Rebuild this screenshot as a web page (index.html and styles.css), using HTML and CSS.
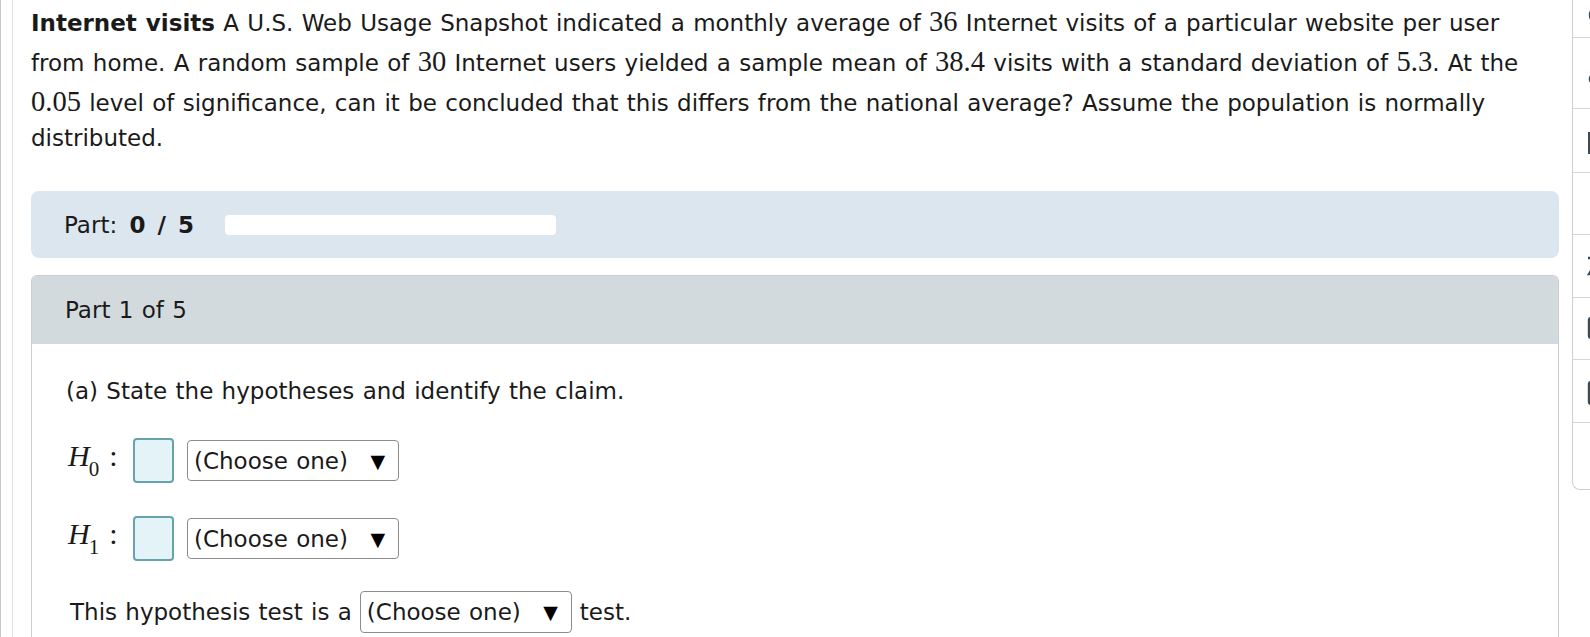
FILE: index.html
```html
<!DOCTYPE html>
<html>
<head>
<meta charset="utf-8">
<link rel="stylesheet" href="styles.css">
</head>
<body>
<div class="edge"></div>
<main class="main">
  <p class="problem"><b>Internet visits</b> A U.S. Web Usage Snapshot indicated a monthly average of <span class="num">36</span> Internet visits of a particular website per user<br>from home. A random sample of <span class="num">30</span> Internet users yielded a sample mean of <span class="num">38.4</span> visits with a standard deviation of <span class="num">5.3</span>. At the<br><span class="num">0.05</span> level of significance, can it be concluded that this differs from the national average? Assume the population is normally<br>distributed.</p>

  <div class="progress">
    <span class="plabel">Part: <b>0 / 5</b></span>
    <div class="bar"></div>
  </div>

  <section class="part">
    <header class="part-head">Part 1 of 5</header>
    <div class="part-body">
      <p class="question">(a) State the hypotheses and identify the claim.</p>

      <div class="hyp">
        <span class="hlabel"><i>H</i><sub>0</sub><span class="colon">:</span></span>
        <span class="sym"></span>
        <span class="select"><span>(Choose one)</span><span class="tri">&#9660;</span></span>
      </div>

      <div class="hyp second">
        <span class="hlabel"><i>H</i><sub>1</sub><span class="colon">:</span></span>
        <span class="sym"></span>
        <span class="select"><span>(Choose one)</span><span class="tri">&#9660;</span></span>
      </div>

      <div class="testline">
        <span>This hypothesis test is a</span>
        <span class="select"><span>(Choose one)</span><span class="tri">&#9660;</span></span>
        <span>test.</span>
      </div>
    </div>
  </section>
</main>

<aside class="side">
  <div class="tool t1">
    <svg class="ic" width="16" height="24" viewBox="0 0 16 24"><path d="M12 3 A9 9 0 1 0 12 21" fill="none" stroke="#3d4a52" stroke-width="2.4"/></svg>
  </div>
  <div class="tool t2">
    <svg class="ic" width="16" height="16" viewBox="0 0 16 16"><circle cx="8" cy="8" r="5" fill="none" stroke="#3d4a52" stroke-width="2.6"/></svg>
  </div>
  <div class="tool t3">
    <svg class="ic" width="16" height="24" viewBox="0 0 16 24"><rect x="1" y="1" width="3" height="22" fill="#3d4a52"/></svg>
  </div>
  <div class="tool t4"></div>
  <div class="tool t5">
    <svg class="ic" width="16" height="20" viewBox="0 0 16 20"><path d="M1 2 H14 M12 2 L2 18 H14" fill="none" stroke="#3d4a52" stroke-width="2.4"/></svg>
  </div>
  <div class="tool t6">
    <svg class="ic" width="16" height="24" viewBox="0 0 16 24"><path d="M9 2 H4 Q2 2 2 4 V20 Q2 22 4 22 H9" fill="none" stroke="#3d4a52" stroke-width="2.4"/></svg>
  </div>
  <div class="tool t7">
    <svg class="ic" width="16" height="26" viewBox="0 0 16 26"><path d="M9 2 H4 Q2 2 2 4 V22 Q2 24 4 24 H9" fill="none" stroke="#3d4a52" stroke-width="2.4"/></svg>
  </div>
  <div class="tool t8"></div>
</aside>
</body>
</html>
```

FILE: styles.css
```css
html, body {
  margin: 0;
  padding: 0;
}

body {
  height: 637px;
  overflow: hidden;
  display: flex;
  align-items: flex-start;
  background: #ffffff;
  color: #1a1a1a;
  font-family: "DejaVu Sans", Verdana, sans-serif;
  font-size: 23px;
  word-spacing: 1px;
}

.edge {
  flex: 0 0 13px;
  align-self: stretch;
  box-sizing: border-box;
  border-left: 1px solid #c9c9c9;
  border-right: 1px solid #e1e1e1;
}

.main {
  flex: 0 0 1546px;
  box-sizing: border-box;
  padding-left: 18px;
}

.problem {
  margin: 0;
  padding-top: 2px;
  line-height: 32px;
  white-space: nowrap;
}

.num {
  display: inline-block;
  font-family: "Liberation Serif", "Times New Roman", serif;
  font-size: 28.5px;
  line-height: 32px;
  padding: 4px 0;
  word-spacing: 0;
}

.progress {
  margin-top: 37px;
  height: 67px;
  box-sizing: border-box;
  background: #dbe6ef;
  border-radius: 8px;
  display: flex;
  align-items: center;
  padding-left: 33px;
}

.plabel {
  word-spacing: 2px;
}

.plabel b {
  margin-left: 3px;
  word-spacing: 4px;
}

.bar {
  margin-left: 31px;
  width: 331px;
  height: 20px;
  background: #ffffff;
  border-radius: 4px;
}

.part {
  margin-top: 17px;
  height: 400px;
  border: 1px solid #cdcdcd;
  border-bottom: none;
  border-radius: 6px 6px 0 0;
  overflow: hidden;
}

.part-head {
  height: 68px;
  background: #d3dadd;
  display: flex;
  align-items: center;
  padding-left: 33px;
}

.part-body {
  padding: 31px 0 0 34px;
}

.question {
  margin: 0;
  line-height: 32px;
}

.hyp {
  display: flex;
  align-items: center;
  height: 45px;
  margin-top: 31px;
}

.hyp.second {
  margin-top: 33px;
}

.hlabel {
  width: 67px;
  box-sizing: border-box;
  padding-left: 2px;
  font-family: "Liberation Serif", "Times New Roman", serif;
  font-size: 30px;
  white-space: nowrap;
}

.hlabel sub {
  font-size: 21px;
  vertical-align: -10px;
  margin-left: -1px;
}

.colon {
  margin-left: 10px;
}

.sym {
  width: 41px;
  height: 45px;
  box-sizing: border-box;
  border: 2px solid #66a3ad;
  border-radius: 4px;
  background: #e3f3f7;
}

.select {
  margin-left: 13px;
  width: 212px;
  height: 41px;
  box-sizing: border-box;
  border: 1px solid #8c8c8c;
  border-radius: 4px;
  background: #ffffff;
  display: flex;
  align-items: center;
  justify-content: space-between;
  padding: 0 13px 0 6px;
  white-space: nowrap;
}

.tri {
  font-size: 19px;
  color: #000;
}

.testline {
  display: flex;
  align-items: center;
  margin-top: 30px;
  padding-left: 4px;
}

.testline .select {
  margin: 0 8px 0 8px;
  height: 42px;
}

.side {
  flex: 0 0 60px;
  margin-left: 13px;
  box-sizing: border-box;
  border-left: 1px solid #cfcfcf;
  border-bottom: 1px solid #cfcfcf;
  border-bottom-left-radius: 8px;
  margin-top: -40px;
}

.tool {
  position: relative;
  border-bottom: 1px solid #d6d6d6;
  box-sizing: border-box;
}

.tool:last-child {
  border-bottom: none;
}

.t1 { height: 78px; }
.t2 { height: 71px; }
.t3 { height: 64px; }
.t4 { height: 62px; }
.t5 { height: 63px; }
.t6 { height: 62px; }
.t7 { height: 63px; }
.t8 { height: 66px; }

.ic {
  position: absolute;
  left: 14px;
}

.t1 .ic { top: 43px; }
.t2 .ic { top: 33px; }
.t3 .ic { top: 22px; }
.t5 .ic { top: 21px; }
.t6 .ic { top: 18px; }
.t7 .ic { top: 20px; }
```
